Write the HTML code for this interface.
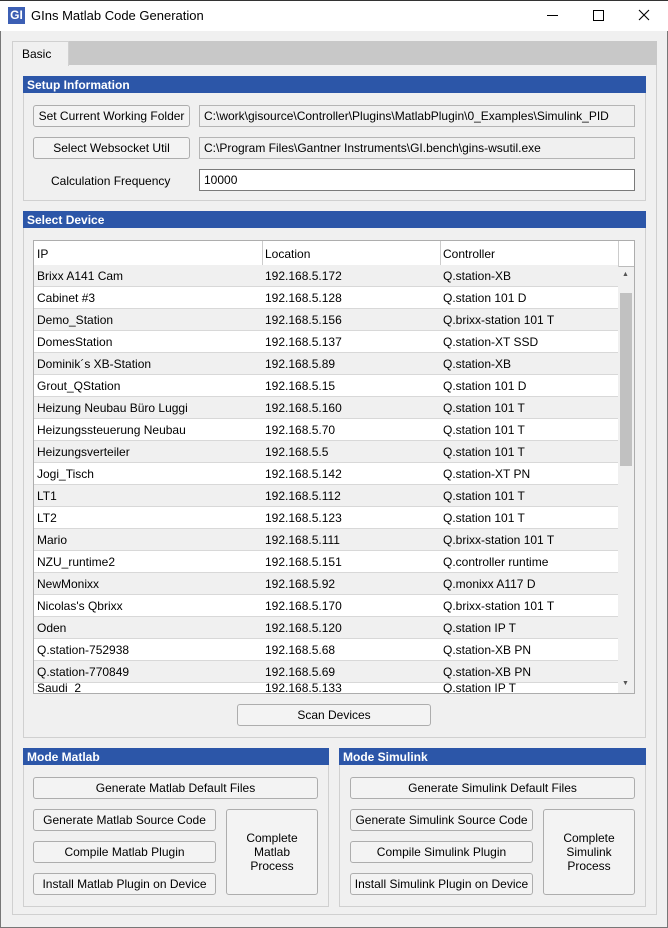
<!DOCTYPE html><html><head><style>
*{box-sizing:border-box;margin:0;padding:0}
body{width:668px;height:928px;background:#f0f0f0;font-family:"Liberation Sans",Arial,sans-serif;font-size:12px;color:#000;position:relative;overflow:hidden}
.a{position:absolute}
.tb{left:0;top:0;width:668px;height:31px;background:#fff;border-top:1px solid #333}
.btn{position:absolute;background:#f3f3f3;border:1px solid #adadad;border-radius:3px;text-align:center;font-size:12px;display:flex;align-items:center;justify-content:center;line-height:14px}
.hd{position:absolute;background:#2c56a8;color:#fff;font-weight:bold;font-size:12px;padding-left:4px;line-height:18px;height:17px}
.grp{position:absolute;border:1px solid #d0d0d0}
.tx{position:absolute;background:#f0f0f0;border:1px solid #b5b5b5;padding-left:4px;line-height:21px;font-size:12px;white-space:nowrap;overflow:hidden}
.row{position:absolute;left:34px;width:584px;height:22px;border-bottom:1px solid #d8d8d8;line-height:23px}
.row span{position:absolute;top:0}
</style></head><body>
<div class="a tb"></div>
<div class="a" style="left:8px;top:7px;width:17px;height:17px;background:#3c5fb4;color:#fff;font-weight:bold;font-size:12px;line-height:17px;text-align:center">GI</div>
<div class="a" style="left:31px;top:8px;font-size:13px">GIns Matlab Code Generation</div>
<div class="a" style="left:547px;top:15px;width:11px;height:1px;background:#000"></div>
<div class="a" style="left:593px;top:10px;width:11px;height:11px;border:1px solid #000"></div>
<svg class="a" style="left:638px;top:9px" width="12" height="12"><path d="M1 1L11 11M11 1L1 11" stroke="#000" stroke-width="1.1"/></svg>
<div class="a" style="left:0;top:31px;width:1px;height:897px;background:#777"></div>
<div class="a" style="left:667px;top:31px;width:1px;height:897px;background:#777"></div>
<div class="a" style="left:0;top:927px;width:668px;height:1px;background:#777"></div>
<div class="a" style="left:69px;top:41px;width:588px;height:24px;background:#c8c8c8"></div>
<div class="a" style="left:12px;top:41px;width:57px;height:25px;border:1px solid #d0d0d0;border-bottom:none;background:#f0f0f0;padding:5px 0 0 9px">Basic</div>
<div class="a" style="left:12px;top:65px;width:645px;height:850px;border:1px solid #d0d0d0;border-top:none"></div>

<div class="grp" style="left:23px;top:76px;width:623px;height:125px"></div>
<div class="hd" style="left:23px;top:76px;width:623px">Setup Information</div>
<div class="btn" style="left:33px;top:105px;width:157px;height:22px">Set Current Working Folder</div>
<div class="tx" style="left:199px;top:105px;width:436px;height:22px">C:\work\gisource\Controller\Plugins\MatlabPlugin\0_Examples\Simulink_PID</div>
<div class="btn" style="left:33px;top:137px;width:157px;height:22px">Select Websocket Util</div>
<div class="tx" style="left:199px;top:137px;width:436px;height:22px">C:\Program Files\Gantner Instruments\GI.bench\gins-wsutil.exe</div>
<div class="a" style="left:51px;top:174px">Calculation Frequency</div>
<div class="tx" style="left:199px;top:169px;width:436px;height:22px;background:#fff;border-color:#7a7a7a">10000</div>

<div class="grp" style="left:23px;top:211px;width:623px;height:527px"></div>
<div class="hd" style="left:23px;top:211px;width:623px">Select Device</div>
<div class="a" style="left:33px;top:240px;width:602px;height:454px;border:1px solid #adadad;background:#fff;overflow:hidden">
</div>
<div class="a" style="left:34px;top:241px;width:600px;height:26px;border-bottom:1px solid #bbb;background:#fff;line-height:26px">
<span class="a" style="left:3px">IP</span><span class="a" style="left:231px">Location</span><span class="a" style="left:409px">Controller</span>
<div class="a" style="left:228px;top:0;width:1px;height:26px;background:#ccc"></div>
<div class="a" style="left:406px;top:0;width:1px;height:26px;background:#ccc"></div>
<div class="a" style="left:584px;top:0;width:1px;height:26px;background:#ccc"></div>
</div>
<div class="a" style="left:262px;top:267px;width:1px;height:426px;background:#d8d8d8"></div>
<div class="a" style="left:440px;top:267px;width:1px;height:426px;background:#d8d8d8"></div>

<div class="row" style="top:265px;background:#f0f0f0"><span style="left:3px">Brixx A141 Cam</span><span style="left:231px">192.168.5.172</span><span style="left:409px">Q.station-XB</span></div>
<div class="row" style="top:287px;background:#fff"><span style="left:3px">Cabinet #3</span><span style="left:231px">192.168.5.128</span><span style="left:409px">Q.station 101 D</span></div>
<div class="row" style="top:309px;background:#f0f0f0"><span style="left:3px">Demo_Station</span><span style="left:231px">192.168.5.156</span><span style="left:409px">Q.brixx-station 101 T</span></div>
<div class="row" style="top:331px;background:#fff"><span style="left:3px">DomesStation</span><span style="left:231px">192.168.5.137</span><span style="left:409px">Q.station-XT SSD</span></div>
<div class="row" style="top:353px;background:#f0f0f0"><span style="left:3px">Dominik´s XB-Station</span><span style="left:231px">192.168.5.89</span><span style="left:409px">Q.station-XB</span></div>
<div class="row" style="top:375px;background:#fff"><span style="left:3px">Grout_QStation</span><span style="left:231px">192.168.5.15</span><span style="left:409px">Q.station 101 D</span></div>
<div class="row" style="top:397px;background:#f0f0f0"><span style="left:3px">Heizung Neubau Büro Luggi</span><span style="left:231px">192.168.5.160</span><span style="left:409px">Q.station 101 T</span></div>
<div class="row" style="top:419px;background:#fff"><span style="left:3px">Heizungssteuerung Neubau</span><span style="left:231px">192.168.5.70</span><span style="left:409px">Q.station 101 T</span></div>
<div class="row" style="top:441px;background:#f0f0f0"><span style="left:3px">Heizungsverteiler</span><span style="left:231px">192.168.5.5</span><span style="left:409px">Q.station 101 T</span></div>
<div class="row" style="top:463px;background:#fff"><span style="left:3px">Jogi_Tisch</span><span style="left:231px">192.168.5.142</span><span style="left:409px">Q.station-XT PN</span></div>
<div class="row" style="top:485px;background:#f0f0f0"><span style="left:3px">LT1</span><span style="left:231px">192.168.5.112</span><span style="left:409px">Q.station 101 T</span></div>
<div class="row" style="top:507px;background:#fff"><span style="left:3px">LT2</span><span style="left:231px">192.168.5.123</span><span style="left:409px">Q.station 101 T</span></div>
<div class="row" style="top:529px;background:#f0f0f0"><span style="left:3px">Mario</span><span style="left:231px">192.168.5.111</span><span style="left:409px">Q.brixx-station 101 T</span></div>
<div class="row" style="top:551px;background:#fff"><span style="left:3px">NZU_runtime2</span><span style="left:231px">192.168.5.151</span><span style="left:409px">Q.controller runtime</span></div>
<div class="row" style="top:573px;background:#f0f0f0"><span style="left:3px">NewMonixx</span><span style="left:231px">192.168.5.92</span><span style="left:409px">Q.monixx A117 D</span></div>
<div class="row" style="top:595px;background:#fff"><span style="left:3px">Nicolas's Qbrixx</span><span style="left:231px">192.168.5.170</span><span style="left:409px">Q.brixx-station 101 T</span></div>
<div class="row" style="top:617px;background:#f0f0f0"><span style="left:3px">Oden</span><span style="left:231px">192.168.5.120</span><span style="left:409px">Q.station IP T</span></div>
<div class="row" style="top:639px;background:#fff"><span style="left:3px">Q.station-752938</span><span style="left:231px">192.168.5.68</span><span style="left:409px">Q.station-XB PN</span></div>
<div class="row" style="top:661px;background:#f0f0f0"><span style="left:3px">Q.station-770849</span><span style="left:231px">192.168.5.69</span><span style="left:409px">Q.station-XB PN</span></div>
<div class="row" style="top:683px;height:10px;background:#fff;overflow:hidden;border:none"><span style="left:3px;top:-6px">Saudi_2</span><span style="left:231px;top:-6px">192.168.5.133</span><span style="left:409px;top:-6px">Q.station IP T</span></div>

<div class="a" style="left:618px;top:267px;width:16px;height:426px;background:#f0f0f0"></div>
<div class="a" style="left:620px;top:293px;width:12px;height:173px;background:#c1c1c1"></div>
<div class="a" style="left:622px;top:271px;font-size:7px;color:#555">▲</div>
<div class="a" style="left:622px;top:680px;font-size:7px;color:#555">▼</div>
<div class="btn" style="left:237px;top:704px;width:194px;height:22px">Scan Devices</div>

<div class="grp" style="left:23px;top:748px;width:306px;height:159px"></div>
<div class="hd" style="left:23px;top:748px;width:306px">Mode Matlab</div>
<div class="btn" style="left:33px;top:777px;width:285px;height:22px">Generate Matlab Default Files</div>
<div class="btn" style="left:33px;top:809px;width:183px;height:22px">Generate Matlab Source Code</div>
<div class="btn" style="left:33px;top:841px;width:183px;height:22px">Compile Matlab Plugin</div>
<div class="btn" style="left:33px;top:873px;width:183px;height:22px">Install Matlab Plugin on Device</div>
<div class="btn" style="left:226px;top:809px;width:92px;height:86px">Complete<br>Matlab<br>Process</div>

<div class="grp" style="left:339px;top:748px;width:307px;height:159px"></div>
<div class="hd" style="left:339px;top:748px;width:307px">Mode Simulink</div>
<div class="btn" style="left:350px;top:777px;width:285px;height:22px">Generate Simulink Default Files</div>
<div class="btn" style="left:350px;top:809px;width:183px;height:22px">Generate Simulink Source Code</div>
<div class="btn" style="left:350px;top:841px;width:183px;height:22px">Compile Simulink Plugin</div>
<div class="btn" style="left:350px;top:873px;width:183px;height:22px">Install Simulink Plugin on Device</div>
<div class="btn" style="left:543px;top:809px;width:92px;height:86px">Complete<br>Simulink<br>Process</div>
</body></html>
